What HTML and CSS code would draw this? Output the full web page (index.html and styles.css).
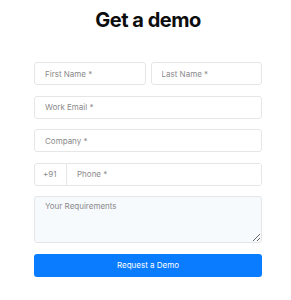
FILE: index.html
```html
<!DOCTYPE html>
<html>
<head>
<meta charset="utf-8">
<link rel="stylesheet" href="styles.css">
</head>
<body>
<div class="page">
  <h1 class="title">Get a demo</h1>
  <form class="form">
    <div class="row two">
      <input class="field" placeholder="First Name *">
      <input class="field" placeholder="Last Name *">
    </div>
    <input class="field" placeholder="Work Email *">
    <input class="field" placeholder="Company *">
    <div class="phone">
      <span class="code">+91</span>
      <input class="phone-input" placeholder="Phone *">
    </div>
    <textarea class="area" placeholder="Your Requirements"></textarea>
    <button type="button" class="submit">Request a Demo</button>
  </form>
</div>
</body>
</html>
```
FILE: styles.css
```css
* { box-sizing: border-box; }
html, body { margin: 0; padding: 0; background: #fff; }
body { font-family: Inter, "Liberation Sans", Arial, sans-serif; }
.page { padding: 8px 29px 0 34px; }
.title {
  margin: 0;
  text-align: center;
  font-size: 20px;
  font-weight: 700;
  color: #0d0d0d;
  line-height: 24px;
  letter-spacing: -0.5px;
}
.form {
  margin-top: 30px;
  width: 228px;
  display: flex;
  flex-direction: column;
  gap: 10.5px;
}
.row.two {
  display: grid;
  grid-template-columns: 1fr 1fr;
  gap: 5px;
}
.field {
  height: 23px;
  width: 100%;
  border: 1px solid #e6e6e6;
  border-radius: 3px;
  padding: 0 10px;
  font-size: 8px;
  font-family: inherit;
  color: #333;
  background: #fff;
  outline: none;
}
.field::placeholder, .phone-input::placeholder, .area::placeholder { color: #8a8a8a; }
.phone {
  display: flex;
  height: 23px;
  border: 1px solid #e6e6e6;
  border-radius: 3px;
  overflow: hidden;
}
.code {
  width: 32px;
  border-right: 1px solid #e6e6e6;
  font-size: 8px;
  color: #8a8a8a;
  display: flex;
  align-items: center;
  padding-left: 8px;
}
.phone-input {
  flex: 1;
  border: none;
  outline: none;
  padding: 0 10px;
  font-size: 8px;
  font-family: inherit;
  min-width: 0;
}
.area {
  height: 47px;
  width: 100%;
  border: 1px solid #e6e6e6;
  border-radius: 3px;
  background: #f7fafd;
  padding: 4px 10px;
  font-size: 8px;
  font-family: inherit;
  resize: vertical;
  outline: none;
}
.submit {
  height: 23px;
  width: 100%;
  border: none;
  border-radius: 3px;
  background: #0a7cff;
  color: #fff;
  font-size: 8px;
  font-family: inherit;
  cursor: pointer;
}
```
